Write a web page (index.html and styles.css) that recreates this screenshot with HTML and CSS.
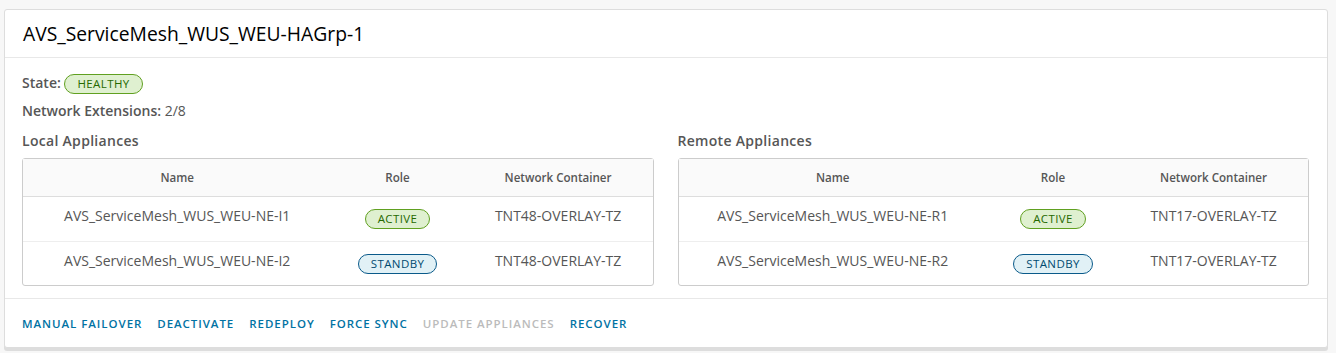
FILE: index.html
```html
<!DOCTYPE html>
<html lang="en">
<head>
  <meta charset="UTF-8">
  <title>Service Mesh HA Group</title>
  <link rel="stylesheet" href="styles.css">
</head>
<body>
  <div class="card">
    <div class="card-header">AVS_ServiceMesh_WUS_WEU-HAGrp-1</div>

    <div class="card-block">
      <div class="field"><b>State:</b> <span class="label label-success">HEALTHY</span></div>
      <div class="field"><b>Network Extensions:</b> 2/8</div>

      <div class="appliances">
        <div class="appliance-group">
          <h4>Local Appliances</h4>
          <table class="grid">
            <thead>
              <tr><th class="col-name">Name</th><th class="col-role">Role</th><th>Network Container</th></tr>
            </thead>
            <tbody>
              <tr>
                <td>AVS_ServiceMesh_WUS_WEU-NE-I1</td>
                <td><span class="label label-success">ACTIVE</span></td>
                <td>TNT48-OVERLAY-TZ</td>
              </tr>
              <tr>
                <td>AVS_ServiceMesh_WUS_WEU-NE-I2</td>
                <td><span class="label label-info">STANDBY</span></td>
                <td>TNT48-OVERLAY-TZ</td>
              </tr>
            </tbody>
          </table>
        </div>

        <div class="appliance-group">
          <h4>Remote Appliances</h4>
          <table class="grid">
            <thead>
              <tr><th class="col-name">Name</th><th class="col-role">Role</th><th>Network Container</th></tr>
            </thead>
            <tbody>
              <tr>
                <td>AVS_ServiceMesh_WUS_WEU-NE-R1</td>
                <td><span class="label label-success">ACTIVE</span></td>
                <td>TNT17-OVERLAY-TZ</td>
              </tr>
              <tr>
                <td>AVS_ServiceMesh_WUS_WEU-NE-R2</td>
                <td><span class="label label-info">STANDBY</span></td>
                <td>TNT17-OVERLAY-TZ</td>
              </tr>
            </tbody>
          </table>
        </div>
      </div>
    </div>

    <div class="card-footer">
      <a href="#">Manual Failover</a>
      <a href="#">Deactivate</a>
      <a href="#">Redeploy</a>
      <a href="#">Force Sync</a>
      <a href="#" class="disabled">Update Appliances</a>
      <a href="#">Recover</a>
    </div>
  </div>
</body>
</html>
```

FILE: styles.css
```css
body {
  margin: 0;
  padding: 9px 8px 5px 4px;
  background: #f7f7f7;
  font-family: "Open Sans", "Liberation Sans", sans-serif;
  color: #565656;
}

.card {
  background: #fff;
  border: 1px solid #ddd;
  border-radius: 3px;
  box-shadow: 0 3px 0 #ddd;
}

.card-header {
  height: 47px;
  padding: 0 18px;
  display: flex;
  align-items: center;
  border-bottom: 1px solid #e8e8e8;
  font-size: 19.3px;
  color: #000;
}

.card-block {
  padding: 11px 18px 12px 17px;
}

.field {
  font-size: 14px;
  line-height: 28px;
}

.field b {
  font-weight: 600;
}

.label {
  display: inline-block;
  height: 18px;
  line-height: 18px;
  padding: 0 12px;
  border-radius: 10px;
  font-size: 11.5px;
  letter-spacing: 0.4px;
  vertical-align: middle;
}

.label-success {
  background: #dff0d0;
  border: 1px solid #60a020;
  color: #266900;
}

.label-info {
  background: #e1f1f6;
  border: 1px solid #0a5a8a;
  color: #004a70;
}

.appliances {
  display: flex;
  gap: 24px;
  margin-top: 6px;
}

.appliance-group {
  flex: 1;
}

h4 {
  margin: 0 0 7px;
  font-size: 14px;
  font-weight: 600;
  letter-spacing: 0.3px;
  line-height: 20px;
}

.grid {
  width: 100%;
  border-collapse: separate;
  border-spacing: 0;
  border: 1px solid #ccc;
  border-radius: 3px;
  font-size: 14px;
  text-align: center;
}

.grid th {
  height: 35px;
  background: #fafafa;
  border-bottom: 1px solid #ddd;
  font-size: 11.6px;
  font-weight: 600;
  color: #565656;
}

.grid .col-name {
  width: 49%;
}

.grid .col-role {
  width: 21%;
}

.grid td {
  height: 44px;
  padding: 0;
  vertical-align: top;
  padding-top: 9px;
  box-sizing: border-box;
  border-top: 1px solid #eee;
}

.grid tbody tr:first-child td {
  border-top: none;
}

.grid td .label {
  margin-top: 3px;
}

.card-footer {
  border-top: 1px solid #e8e8e8;
  padding: 17px 17px 16px;
  display: flex;
  gap: 15px;
}

.card-footer a {
  color: #0072a3;
  text-decoration: none;
  text-transform: uppercase;
  font-size: 11.5px;
  font-weight: 600;
  letter-spacing: 0.95px;
}

.card-footer a.disabled {
  color: #bbb;
}
```
